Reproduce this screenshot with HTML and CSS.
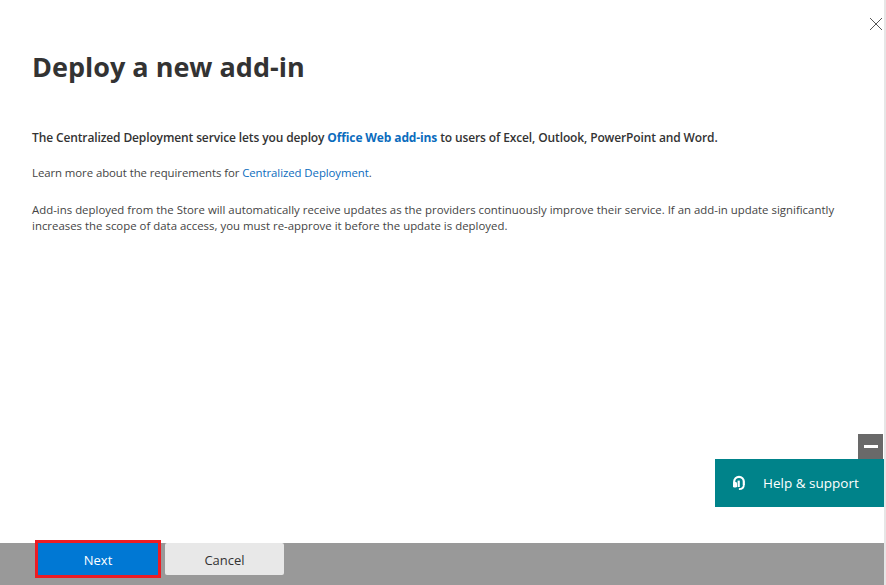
FILE: index.html
```html
<!DOCTYPE html>
<html lang="en">
<head>
<meta charset="utf-8">
<title>Deploy a new add-in</title>
<link rel="stylesheet" href="styles.css">
</head>
<body>
<div class="panel">
  <main class="content">
    <button class="close" aria-label="Close">
      <svg width="14" height="14" viewBox="0 0 14 14"><path d="M1 1L13 13M13 1L1 13" stroke="#555" stroke-width="1" fill="none"/></svg>
    </button>
    <h1 class="title">Deploy a new add-in</h1>
    <p class="lead">The Centralized Deployment service lets you deploy <a href="#">Office Web add-ins</a> to users of Excel, Outlook, PowerPoint and Word.</p>
    <p class="body-text learn">Learn more about the requirements for <a href="#">Centralized Deployment</a>.</p>
    <p class="body-text para">Add-ins deployed from the Store will automatically receive updates as the providers continuously improve their service. If an add-in update significantly increases the scope of data access, you must re-approve it before the update is deployed.</p>
  </main>
  <footer class="footer">
    <button class="btn primary">Next</button>
    <button class="btn secondary">Cancel</button>
  </footer>
</div>
<div class="help">
  <button class="help-min" aria-label="Minimize"><span class="dash"></span></button>
  <div class="help-bar">
    <svg class="help-icon" width="14" height="16" viewBox="0 0 14 16"><path d="M2.2 10.5V6.6A4.8 4.8 0 0 1 11.8 6.6V10" stroke="#fff" stroke-width="2.2" fill="none"/><path d="M5.6 5.6h2.2V12H5.6z" fill="#fff"/><rect x="1" y="7" width="4" height="5.6" rx="1.4" fill="#fff"/><path d="M11.9 9.5c0 3-2 4.6-5 4.6" stroke="#fff" stroke-width="1.8" fill="none"/></svg>
    <span class="help-text">Help &amp; support</span>
  </div>
</div>
</body>
</html>
```
FILE: styles.css
```css
* { box-sizing: border-box; }
html, body { margin: 0; height: 100%; overflow: hidden; }
body { font-family: "Open Sans", "Noto Sans", sans-serif; background: #fff; color: #333; }
.panel { height: 585px; display: flex; flex-direction: column; border-right: 2px solid #e6e6e6; }
.content { flex: 1; position: relative; padding: 46px 32px 0 32px; }
.close { position: absolute; top: 17px; right: 1px; width: 14px; height: 14px; padding: 0; border: 0; background: none; display: flex; }
.title { margin: 0; font-size: 27px; line-height: 42px; font-weight: 700; color: #333; }
.lead { margin: 41px 0 0; font-size: 12px; line-height: 18px; font-weight: 600; color: #333; letter-spacing: -0.125px; }
.lead a { color: #0b6cbd; text-decoration: none; font-weight: 700; }
.body-text { margin: 0; font-size: 11.4px; line-height: 16px; color: #444; }
.body-text a { color: #0b6cbd; text-decoration: none; }
.learn { margin: 18px 0 21px; letter-spacing: -0.07px; }
.para { letter-spacing: 0.01px; }
.footer { height: 42px; background: #999; display: flex; gap: 7px; padding: 0 0 0 38px; align-items: flex-start; }
.btn { width: 120px; height: 32px; border: 0; border-radius: 2px; font: 400 13px "Open Sans", sans-serif; padding: 2px 0 0; }
.primary { background: #0078d4; color: #fff; outline: 3px solid #ed1c24; outline-offset: 0; border-radius: 0; }
.secondary { width: 119px; background: #e8e8e8; color: #333; }
.help { position: absolute; left: 715px; top: 434px; width: 169px; display: flex; flex-direction: column; align-items: flex-end; }
.help-min { width: 25px; height: 25px; margin-right: 1px; border: 0; padding: 0; background: #696969; display: flex; align-items: center; justify-content: center; }
.dash { width: 14px; height: 2.5px; background: #fff; }
.help-bar { width: 169px; height: 48px; background: #00838a; color: #fff; display: flex; align-items: center; padding-left: 17px; gap: 17px; }
.help-text { font-size: 13.5px; }
```
